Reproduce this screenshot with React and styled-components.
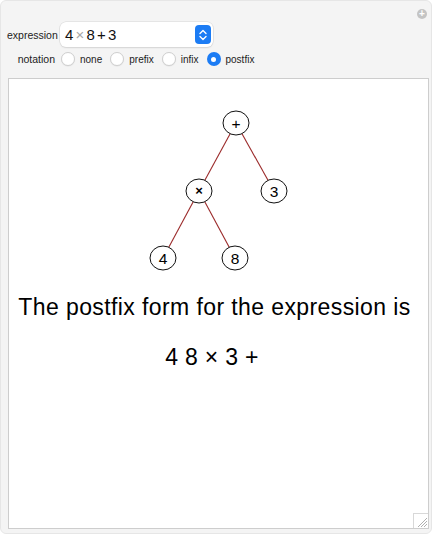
import React from "react";
import styled, { createGlobalStyle } from "styled-components";

const GlobalStyle = createGlobalStyle`
  html, body {
    margin: 0;
    padding: 0;
    background: #ffffff;
    font-family: "Liberation Sans", Arial, sans-serif;
  }
`;

const Panel = styled.div`
  position: relative;
  box-sizing: border-box;
  width: 432px;
  height: 534px;
  background: #f4f4f4;
  border: 1px solid #e6e6e6;
  border-radius: 6px;
  padding: 21px 4px 4px 6px;
  display: flex;
  flex-direction: column;
`;

const AddButton = styled.div`
  position: absolute;
  top: 8px;
  right: 4px;
  width: 10px;
  height: 10px;
  border-radius: 50%;
  background: #c4c4c4;
  display: flex;
  align-items: center;
  justify-content: center;
  color: #fff;
  font-size: 10px;
  font-weight: bold;
  line-height: 10px;
`;

const Controls = styled.div`
  display: grid;
  grid-template-columns: 48px auto;
  column-gap: 5px;
  row-gap: 5px;
  align-items: center;
  margin-bottom: 12px;
`;

const Label = styled.span`
  font-size: 10.5px;
  color: #222;
  text-align: right;
  white-space: nowrap;
`;

const Select = styled.div`
  box-sizing: border-box;
  width: 153px;
  height: 25px;
  background: #fff;
  border-radius: 6px;
  box-shadow: 0 0 0 0.5px #d6d6d6, 0 1px 1.5px rgba(0, 0, 0, 0.12);
  display: flex;
  align-items: center;
  justify-content: space-between;
  padding: 0 2px 0 5px;
`;

const SelectText = styled.span`
  font-family: "Liberation Sans", Arial, sans-serif;
  font-size: 15px;
  color: #111;
  letter-spacing: 0.2px;
`;

const Op = styled.span`
  color: ${(p) => (p.$dim ? "#a8a8a8" : "#111")};
  margin: 0 2px;
`;

const Stepper = styled.div`
  width: 16px;
  height: 19px;
  border-radius: 4px;
  background: #1c7cf4;
  display: flex;
  align-items: center;
  justify-content: center;
`;

const RadioRow = styled.div`
  display: flex;
  align-items: center;
  margin-left: 1px;
`;

const RadioItem = styled.label`
  display: flex;
  align-items: center;
  margin-right: 8px;
  font-size: 10px;
  color: #222;
`;

const RadioCircle = styled.span`
  box-sizing: border-box;
  width: 14px;
  height: 14px;
  border-radius: 50%;
  margin-right: 5px;
  display: flex;
  align-items: center;
  justify-content: center;
  background: ${(p) => (p.$checked ? "#1c7cf4" : "#fff")};
  border: ${(p) => (p.$checked ? "none" : "1px solid #cfcfcf")};
  box-shadow: ${(p) => (p.$checked ? "none" : "0 0.5px 1px rgba(0,0,0,0.08)")};

  &::after {
    content: "";
    display: ${(p) => (p.$checked ? "block" : "none")};
    width: 5px;
    height: 5px;
    border-radius: 50%;
    background: #fff;
  }
`;

const Output = styled.div`
  position: relative;
  box-sizing: border-box;
  width: 421px;
  height: 451px;
  margin-left: 1px;
  background: #fff;
  border: 1px solid #cdcdcd;
  display: flex;
  flex-direction: column;
  align-items: center;
`;

const TreeArea = styled.svg`
  display: block;
  width: 419px;
  height: 206px;
`;

const Sentence = styled.div`
  font-family: "Liberation Sans", Arial, sans-serif;
  font-size: 23px;
  letter-spacing: 0.4px;
  color: #000;
  line-height: 26px;
  white-space: nowrap;
  margin-top: 9px;
  margin-right: 8px;
`;

const Result = styled.div`
  font-family: "Liberation Sans", Arial, sans-serif;
  font-size: 23px;
  color: #000;
  line-height: 26px;
  margin-top: 24px;
  margin-right: 13px;
  letter-spacing: 0.3px;
`;

const Grip = styled.div`
  position: absolute;
  right: 0;
  bottom: 0;
  width: 15px;
  height: 15px;
  box-sizing: border-box;
  border-left: 1px solid #d8d8d8;
  border-top: 1px solid #d8d8d8;
  background: #fff;
`;

const nodes = [
  { id: "plus", x: 227, y: 44, label: "+" },
  { id: "times", x: 190, y: 112, label: "×" },
  { id: "three", x: 265, y: 112, label: "3" },
  { id: "four", x: 154, y: 179, label: "4" },
  { id: "eight", x: 226, y: 179, label: "8" },
];

const edges = [
  ["plus", "times"],
  ["plus", "three"],
  ["times", "four"],
  ["times", "eight"],
];

const byId = Object.fromEntries(nodes.map((n) => [n.id, n]));

const Tree = () => (
  <TreeArea viewBox="0 0 419 206">
    {edges.map(([a, b]) => (
      <line
        key={a + b}
        x1={byId[a].x}
        y1={byId[a].y}
        x2={byId[b].x}
        y2={byId[b].y}
        stroke="#9b2a2a"
        strokeWidth="1.1"
      />
    ))}
    {nodes.map((n) => (
      <g key={n.id}>
        <ellipse cx={n.x} cy={n.y} rx="13" ry="12" fill="#fff" stroke="#111" strokeWidth="1" />
        <text
          x={n.x}
          y={n.y + (n.label === "×" ? 4 : 5.5)}
          textAnchor="middle"
          fontFamily="Liberation Sans, Arial, sans-serif"
          fontSize={n.label === "×" ? 13 : 15.5}
          fontWeight={n.label === "×" ? "bold" : "normal"}
          fill="#000"
        >
          {n.label}
        </text>
      </g>
    ))}
  </TreeArea>
);

const options = ["none", "prefix", "infix", "postfix"];

export default function App() {
  return (
    <>
      <GlobalStyle />
      <Panel>
        <AddButton>+</AddButton>
        <Controls>
          <Label>expression</Label>
          <Select>
            <SelectText>
              4<Op $dim>×</Op>8<Op>+</Op>3
            </SelectText>
            <Stepper>
              <svg width="10" height="14" viewBox="0 0 10 14">
                <path d="M2 5.5 L5 2.5 L8 5.5" fill="none" stroke="#fff" strokeWidth="1.4" strokeLinecap="round" strokeLinejoin="round" />
                <path d="M2 8.5 L5 11.5 L8 8.5" fill="none" stroke="#fff" strokeWidth="1.4" strokeLinecap="round" strokeLinejoin="round" />
              </svg>
            </Stepper>
          </Select>
          <Label>notation</Label>
          <RadioRow>
            {options.map((o) => (
              <RadioItem key={o}>
                <RadioCircle $checked={o === "postfix"} />
                {o}
              </RadioItem>
            ))}
          </RadioRow>
        </Controls>
        <Output>
          <Tree />
          <Sentence>The postfix form for the expression is</Sentence>
          <Result>4 8 × 3 +</Result>
          <Grip>
            <svg width="14" height="14" viewBox="0 0 14 14">
              <path d="M4 13 L13 4 M7 13 L13 7 M10 13 L13 10" stroke="#9a9a9a" strokeWidth="0.8" />
            </svg>
          </Grip>
        </Output>
      </Panel>
    </>
  );
}
